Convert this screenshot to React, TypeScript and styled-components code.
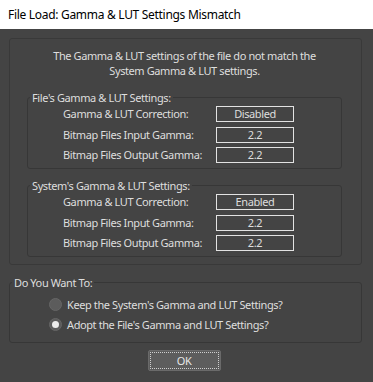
import React from 'react';
import styled, { createGlobalStyle } from 'styled-components';

const Global = createGlobalStyle`
  html, body { margin: 0; padding: 0; background: #444444; }
  body { font-family: "Noto Sans", "Open Sans", sans-serif; font-size: 11px; letter-spacing: -0.4px; }
  * { box-sizing: border-box; }
`;

const Window = styled.div`
  width: 373px;
  height: 382px;
  display: flex;
  flex-direction: column;
  background: #444444;
  overflow: hidden;
`;

const TitleBar = styled.div`
  height: 29px;
  flex-shrink: 0;
  background: #ffffff;
  color: #000000;
  display: flex;
  align-items: center;
  padding-left: 8px;
  font-size: 12px;
  letter-spacing: -0.3px;
`;

const Body = styled.div`
  flex: 1;
  display: flex;
  flex-direction: column;
  padding: 9px 0 0 9px;
  color: #dedede;
`;

const Panel = styled.div`
  width: 353px;
  border: 1px solid #393939;
  border-radius: 3px;
  display: flex;
  flex-direction: column;
  padding: 9px 19px 7px 17px;
`;

const Message = styled.div`
  text-align: center;
  line-height: 15px;
  margin-bottom: 12px;
`;

const Group = styled.fieldset`
  margin: 0;
  border: 1px solid #373737;
  border-radius: 3px;
  padding: 1px 0 5px 0;
  min-width: 0;
  & + & { margin-top: 9px; }
`;

const Legend = styled.legend`
  padding: 0 2px;
  margin-left: 2px;
  line-height: 15px;
  color: #dedede;
`;

const Rows = styled.div`
  display: grid;
  grid-template-columns: 153px 78px;
  row-gap: 4.5px;
  padding-left: 35px;
`;

const Label = styled.div`
  height: 16px;
  line-height: 16px;
  white-space: nowrap;
`;

const ValueBox = styled.div`
  width: 78px;
  height: 16px;
  border: 1px solid #e2e2e2;
  text-align: center;
  line-height: 14px;
`;

const ChoiceGroup = styled.fieldset`
  width: 353px;
  margin: 10px 0 0 0;
  border: 1px solid #373737;
  border-radius: 3px;
  padding: 4px 0 8px 0;
  min-width: 0;
`;

const ChoiceLegend = styled.legend`
  padding: 0 2px;
  margin-left: 2px;
  line-height: 15px;
  color: #dedede;
`;

const ChoiceList = styled.div`
  display: flex;
  flex-direction: column;
  padding-left: 39px;
`;

const RadioRow = styled.label`
  height: 20px;
  display: flex;
  align-items: center;
  gap: 5px;
`;

const RadioDot = styled.span<{ $checked?: boolean }>`
  width: 13px;
  height: 13px;
  border-radius: 50%;
  background: #5c5c5c;
  border: 1px solid #666666;
  display: flex;
  align-items: center;
  justify-content: center;
  &::after {
    content: '';
    width: 7px;
    height: 7px;
    border-radius: 50%;
    background: ${(p) => (p.$checked ? '#ececec' : 'transparent')};
  }
`;

const OkButton = styled.button`
  align-self: center;
  margin: 7px 0 0 -14px;
  width: 73px;
  height: 21px;
  background: #5d5d5d;
  border: 1px solid #6a6a6a;
  border-radius: 2px;
  color: #e6e6e6;
  font-family: inherit;
  font-size: 11px;
  letter-spacing: inherit;
  padding: 0;
  outline: 1px dotted #cfcfcf;
  outline-offset: -3px;
`;

const fileRows = [
  ['Gamma & LUT Correction:', 'Disabled'],
  ['Bitmap Files Input Gamma:', '2.2'],
  ['Bitmap Files Output Gamma:', '2.2'],
];

const systemRows = [
  ['Gamma & LUT Correction:', 'Enabled'],
  ['Bitmap Files Input Gamma:', '2.2'],
  ['Bitmap Files Output Gamma:', '2.2'],
];

function SettingsGroup({ title, rows }: { title: string; rows: string[][] }) {
  return (
    <Group>
      <Legend>{title}</Legend>
      <Rows>
        {rows.map(([l, v]) => (
          <React.Fragment key={l}>
            <Label>{l}</Label>
            <ValueBox>{v}</ValueBox>
          </React.Fragment>
        ))}
      </Rows>
    </Group>
  );
}

export default function App() {
  return (
    <>
      <Global />
      <Window>
        <TitleBar>File Load: Gamma &amp; LUT Settings Mismatch</TitleBar>
        <Body>
          <Panel>
            <Message>
              The Gamma &amp; LUT settings of the file do not match the
              <br />
              System Gamma &amp; LUT settings.
            </Message>
            <SettingsGroup title="File's Gamma & LUT Settings:" rows={fileRows} />
            <SettingsGroup title="System's Gamma & LUT Settings:" rows={systemRows} />
          </Panel>
          <ChoiceGroup>
            <ChoiceLegend>Do You Want To:</ChoiceLegend>
            <ChoiceList>
              <RadioRow>
                <RadioDot />
                Keep the System's Gamma and LUT Settings?
              </RadioRow>
              <RadioRow>
                <RadioDot $checked />
                Adopt the File's Gamma and LUT Settings?
              </RadioRow>
            </ChoiceList>
          </ChoiceGroup>
          <OkButton>OK</OkButton>
        </Body>
      </Window>
    </>
  );
}
